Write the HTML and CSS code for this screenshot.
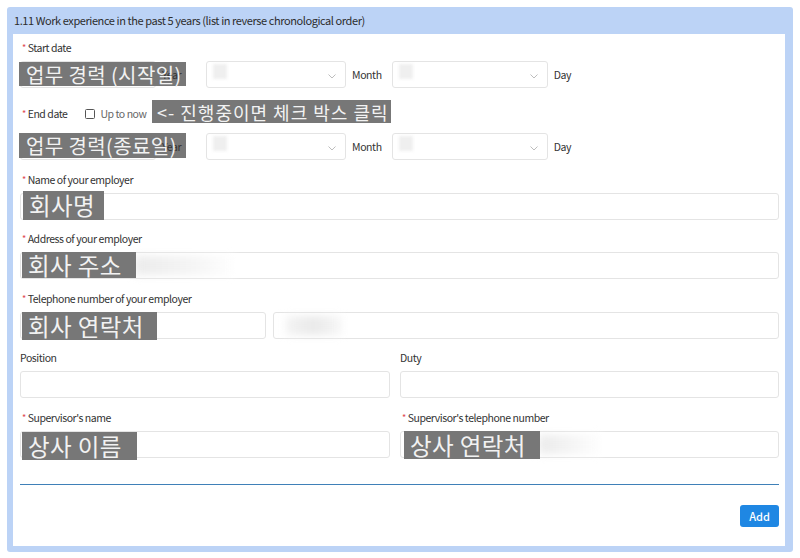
FILE: index.html
```html
<!DOCTYPE html>
<html lang="en">
<head>
<meta charset="utf-8">
<title>Work experience</title>
<link rel="stylesheet" href="styles.css">
</head>
<body>
<div class="panel">
  <div class="panel-head">1.11 Work experience in the past 5 years (list in reverse chronological order)</div>
  <div class="panel-body">

    <div class="field">
      <div class="label"><span class="req">*</span> Start date</div>
      <div class="date-row">
        <div class="select s1"><span class="chev"><svg width="8" height="5" viewBox="0 0 8 5"><polyline points="0.5,0.5 4,4 7.5,0.5" fill="none" stroke="#bdbdbd" stroke-width="1"/></svg></span></div>
        <span class="unit unit-year">Year</span>
        <div class="select s2"><span class="blur-sq"></span><span class="chev"><svg width="8" height="5" viewBox="0 0 8 5"><polyline points="0.5,0.5 4,4 7.5,0.5" fill="none" stroke="#bdbdbd" stroke-width="1"/></svg></span></div>
        <span class="unit">Month</span>
        <div class="select s3"><span class="blur-sq"></span><span class="chev"><svg width="8" height="5" viewBox="0 0 8 5"><polyline points="0.5,0.5 4,4 7.5,0.5" fill="none" stroke="#bdbdbd" stroke-width="1"/></svg></span></div>
        <span class="unit">Day</span>
        <div class="ann ann-start"><span class="ann-text">업무 경력 (시작일)</span></div>
      </div>
    </div>

    <div class="field">
      <div class="label end-row">
        <span><span class="req">*</span> End date</span>
        <span class="check"><span class="box"></span>Up to now</span>
        <div class="ann ann-check"><span class="ann-text">&lt;- 진행중이면 체크 박스 클릭</span></div>
      </div>
      <div class="date-row">
        <div class="select s1"><span class="chev"><svg width="8" height="5" viewBox="0 0 8 5"><polyline points="0.5,0.5 4,4 7.5,0.5" fill="none" stroke="#bdbdbd" stroke-width="1"/></svg></span></div>
        <span class="unit unit-year">Year</span>
        <div class="select s2"><span class="blur-sq"></span><span class="chev"><svg width="8" height="5" viewBox="0 0 8 5"><polyline points="0.5,0.5 4,4 7.5,0.5" fill="none" stroke="#bdbdbd" stroke-width="1"/></svg></span></div>
        <span class="unit">Month</span>
        <div class="select s3"><span class="blur-sq"></span><span class="chev"><svg width="8" height="5" viewBox="0 0 8 5"><polyline points="0.5,0.5 4,4 7.5,0.5" fill="none" stroke="#bdbdbd" stroke-width="1"/></svg></span></div>
        <span class="unit">Day</span>
        <div class="ann ann-end"><span class="ann-text">업무 경력(종료일)</span></div>
      </div>
    </div>

    <div class="field">
      <div class="label"><span class="req">*</span> Name of your employer</div>
      <div class="input">
        <div class="ann ann-name"><span class="ann-text">회사명</span></div>
      </div>
    </div>

    <div class="field">
      <div class="label"><span class="req">*</span> Address of your employer</div>
      <div class="input">
        <span class="blur blur-addr"></span>
        <div class="ann ann-addr"><span class="ann-text">회사 주소</span></div>
      </div>
    </div>

    <div class="field">
      <div class="label"><span class="req">*</span> Telephone number of your employer</div>
      <div class="phone-row">
        <div class="input phone-a">
          <div class="ann ann-tel"><span class="ann-text">회사 연락처</span></div>
        </div>
        <div class="input phone-b">
          <span class="blur blur-tel"></span>
        </div>
      </div>
    </div>

    <div class="two-col">
      <div class="field">
        <div class="label">Position</div>
        <div class="input"></div>
      </div>
      <div class="field">
        <div class="label">Duty</div>
        <div class="input"></div>
      </div>
    </div>

    <div class="two-col">
      <div class="field">
        <div class="label"><span class="req">*</span> Supervisor's name</div>
        <div class="input">
          <div class="ann ann-sup"><span class="ann-text">상사 이름</span></div>
        </div>
      </div>
      <div class="field">
        <div class="label"><span class="req">*</span> Supervisor's telephone number</div>
        <div class="input">
          <span class="blur blur-sup"></span>
          <div class="ann ann-suptel"><span class="ann-text">상사 연락처</span></div>
        </div>
      </div>
    </div>

    <div class="divider"></div>

    <div class="actions">
      <button class="btn-add" type="button">Add</button>
    </div>
  </div>
</div>
</body>
</html>
```

FILE: styles.css
```css
html, body {
  margin: 0;
  padding: 0;
  background: #ffffff;
}

body {
  font-family: "Noto Sans CJK KR", "Noto Sans", sans-serif;
  color: #333333;
  padding: 7px 7px 6px 7px;
}

.panel {
  width: 786px;
  height: 545px;
  box-sizing: border-box;
  background: #bcd3f6;
  border-radius: 3px;
  padding: 0 8px 6px 6px;
  display: flex;
  flex-direction: column;
}

.panel-head {
  height: 27px;
  line-height: 27px;
  font-size: 11px;
  letter-spacing: -0.42px;
  padding-left: 1px;
  color: #2d2d2d;
  white-space: nowrap;
}

.panel-body {
  flex: 1;
  background: #ffffff;
  padding: 6px 6px 0 7px;
}

.field {
  margin-bottom: 11.6px;
}

.label {
  font-size: 10.5px;
  letter-spacing: -0.45px;
  line-height: 16px;
  height: 16px;
  margin-bottom: 5px;
  color: #333333;
  white-space: nowrap;
}

.req {
  color: #e0484e;
  font-size: 9px;
  padding-left: 2px;
  vertical-align: 1px;
}

.date-row {
  position: relative;
  display: flex;
  align-items: center;
  height: 27px;
}

.select {
  position: relative;
  height: 27px;
  box-sizing: border-box;
  border: 1px solid #e4e4e4;
  border-radius: 3px;
  background: #ffffff;
}

.s1 { width: 136px; }
.s2 { width: 140px; }
.s3 { width: 156px; }

.chev {
  position: absolute;
  right: 9px;
  top: 10px;
  line-height: 0;
}

.blur-sq {
  position: absolute;
  left: 6px;
  top: 2px;
  width: 14px;
  height: 15px;
  background: #efefef;
  filter: blur(1.5px);
}

.unit {
  position: relative;
  z-index: 2;
  font-size: 10.5px;
  letter-spacing: -0.4px;
  color: #333333;
  margin: 0 10px 0 6px;
}

.unit-year {
  width: 34px;
}

.end-row {
  position: relative;
  display: flex;
  align-items: center;
  margin-top: 18px;
  margin-bottom: 11px;
}

.check {
  display: inline-flex;
  align-items: center;
  margin-left: 18px;
  color: #666666;
}

.check .box {
  width: 8px;
  height: 8px;
  border: 1px solid #555555;
  border-radius: 1.5px;
  margin-right: 5px;
  background: #ffffff;
}

.input {
  position: relative;
  height: 27px;
  box-sizing: border-box;
  border: 1px solid #e4e4e4;
  border-radius: 3px;
  background: #ffffff;
}

.phone-row {
  display: flex;
  gap: 7px;
}

.phone-a { width: 246px; }
.phone-b { flex: 1; }

.two-col {
  display: grid;
  grid-template-columns: 370px 1fr;
  gap: 10px;
}

.blur {
  position: absolute;
  top: 3px;
  height: 19px;
  filter: blur(4px);
}

.blur-addr {
  left: 114px;
  width: 100px;
  background: linear-gradient(to right, #ebebeb, #f5f5f5 60%, #ffffff);
}

.blur-tel {
  left: 12px;
  width: 56px;
  background: linear-gradient(to right, #f3f3f3, #e9e9e9 50%, #f7f7f7);
}

.blur-sup {
  left: 138px;
  width: 62px;
  background: linear-gradient(to right, #eaeaea, #f6f6f6 60%, #ffffff);
}

/* screenshot annotations laid over the form */
.ann {
  position: absolute;
  color: #f2f2f2;
  font-weight: 400;
  letter-spacing: 0.4px;
  white-space: nowrap;
  box-sizing: border-box;
  display: flex;
  align-items: center;
}

.ann::before {
  content: "";
  position: absolute;
  inset: 0;
  background: #777777;
  z-index: 1;
}

.ann-text {
  position: relative;
  z-index: 3;
}

.ann-start {
  left: -1px;
  top: 1px;
  width: 167px;
  height: 24px;
  font-size: 20px;
  padding-left: 7px;
}

.ann-end {
  left: -1px;
  top: 0;
  width: 167px;
  height: 25px;
  font-size: 20px;
  padding-left: 7px;
}

.ann-check {
  left: 132px;
  top: -6px;
  width: 239px;
  height: 23px;
  font-size: 18px;
  letter-spacing: 1px;
  padding-left: 5px;
}

.ann-name {
  left: 2px;
  top: -3px;
  width: 81px;
  height: 29px;
  font-size: 23.5px;
  padding-left: 6px;
}

.ann-addr {
  left: 1px;
  top: -1px;
  width: 114px;
  height: 26px;
  font-size: 23.5px;
  padding-left: 6px;
}

.ann-tel {
  left: 1px;
  top: -1px;
  width: 135px;
  height: 28px;
  font-size: 23.5px;
  padding-left: 6px;
}

.ann-sup {
  left: 1px;
  top: 0;
  width: 115px;
  height: 28px;
  font-size: 23.5px;
  padding-left: 6px;
}

.ann-suptel {
  left: 3px;
  top: -1px;
  width: 136px;
  height: 28px;
  font-size: 23.5px;
  padding-left: 6px;
}

.divider {
  margin-top: 14px;
  border-top: 1px solid #3f80b8;
}

.actions {
  display: flex;
  justify-content: flex-end;
  padding-top: 20px;
}

.btn-add {
  width: 39px;
  height: 22px;
  padding: 0;
  border: none;
  border-radius: 3px;
  background: #1f87e3;
  color: #ffffff;
  font-family: "Noto Sans CJK KR", "Noto Sans", sans-serif;
  font-size: 11px;
  font-weight: 500;
}
```
